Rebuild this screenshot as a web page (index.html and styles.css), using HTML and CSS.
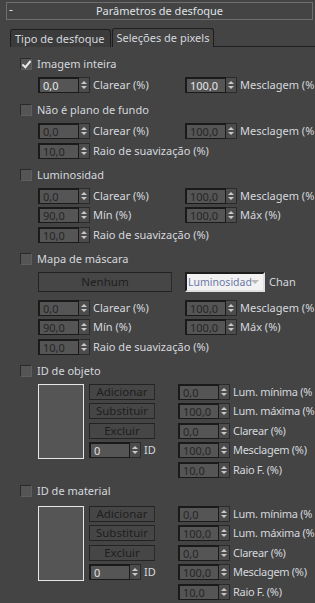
FILE: index.html
```html
<!DOCTYPE html>
<html lang="pt">
<head>
    <meta charset="UTF-8">
    <meta name="viewport" content="width=device-width, initial-scale=1.0">
    <title>Parâmetros de desfoque</title>
    <link rel="stylesheet" href="styles.css">
</head>
<body>

<!-- Rollout header -->
<div class="rollout-head">
    <span class="minus">-</span>
    <span class="title">Parâmetros de desfoque</span>
</div>

<!-- Tabs -->
<div class="tabs">
    <div class="tab">Tipo de desfoque</div>
    <div class="tab active">Seleções de pixels</div>
    <div class="tab-line"></div>
</div>

<!-- Imagem inteira -->
<div class="section first">
    <label class="check"><span class="box on"></span>Imagem inteira</label>
    <div class="rows">
        <div class="row">
            <div class="spin left"><span class="field live">0,0</span><span class="arrows"></span><span class="lbl">Clarear (%)</span></div>
            <div class="spin"><span class="field live">100,0</span><span class="arrows"></span><span class="lbl">Mesclagem (%</span></div>
        </div>
    </div>
</div>

<!-- Não é plano de fundo -->
<div class="section second">
    <label class="check"><span class="box"></span>Não é plano de fundo</label>
    <div class="rows">
        <div class="row">
            <div class="spin left"><span class="field">0,0</span><span class="arrows"></span><span class="lbl">Clarear (%)</span></div>
            <div class="spin"><span class="field">100,0</span><span class="arrows"></span><span class="lbl">Mesclagem (%</span></div>
        </div>
        <div class="row">
            <div class="spin left"><span class="field">10,0</span><span class="arrows"></span><span class="lbl">Raio de suavização (%)</span></div>
        </div>
    </div>
</div>

<!-- Luminosidad -->
<div class="section">
    <label class="check"><span class="box"></span>Luminosidad</label>
    <div class="rows">
        <div class="row">
            <div class="spin left"><span class="field">0,0</span><span class="arrows"></span><span class="lbl">Clarear (%)</span></div>
            <div class="spin"><span class="field">100,0</span><span class="arrows"></span><span class="lbl">Mesclagem (%</span></div>
        </div>
        <div class="row">
            <div class="spin left"><span class="field">90,0</span><span class="arrows"></span><span class="lbl">Mín (%)</span></div>
            <div class="spin"><span class="field">100,0</span><span class="arrows"></span><span class="lbl">Máx (%)</span></div>
        </div>
        <div class="row">
            <div class="spin left"><span class="field">10,0</span><span class="arrows"></span><span class="lbl">Raio de suavização (%)</span></div>
        </div>
    </div>
</div>

<!-- Mapa de máscara -->
<div class="section">
    <label class="check"><span class="box"></span>Mapa de máscara</label>
    <div class="rows">
        <div class="row map-row">
            <div class="btn wide">Nenhum</div>
            <div class="drop"><span class="drop-text">Luminosidad</span><span class="drop-arrow"></span></div>
            <span class="lbl">Chan</span>
        </div>
        <div class="row after-map">
            <div class="spin left"><span class="field">0,0</span><span class="arrows"></span><span class="lbl">Clarear (%)</span></div>
            <div class="spin"><span class="field">100,0</span><span class="arrows"></span><span class="lbl">Mesclagem (%</span></div>
        </div>
        <div class="row">
            <div class="spin left"><span class="field">90,0</span><span class="arrows"></span><span class="lbl">Mín (%)</span></div>
            <div class="spin"><span class="field">100,0</span><span class="arrows"></span><span class="lbl">Máx (%)</span></div>
        </div>
        <div class="row">
            <div class="spin left"><span class="field">10,0</span><span class="arrows"></span><span class="lbl">Raio de suavização (%)</span></div>
        </div>
    </div>
</div>

<!-- ID de objeto -->
<div class="section">
    <label class="check"><span class="box"></span>ID de objeto</label>
    <div class="id-block">
        <div class="list"></div>
        <div class="btn-col">
            <div class="btn">Adicionar</div>
            <div class="btn">Substituir</div>
            <div class="btn">Excluir</div>
            <div class="spin"><span class="field id-field">0</span><span class="arrows"></span><span class="lbl">ID</span></div>
        </div>
        <div class="right-col">
            <div class="spin"><span class="field">0,0</span><span class="arrows"></span><span class="lbl">Lum. mínima (%</span></div>
            <div class="spin"><span class="field">100,0</span><span class="arrows"></span><span class="lbl">Lum. máxima (%</span></div>
            <div class="spin"><span class="field">0,0</span><span class="arrows"></span><span class="lbl">Clarear (%)</span></div>
            <div class="spin"><span class="field">100,0</span><span class="arrows"></span><span class="lbl">Mesclagem (%)</span></div>
            <div class="spin"><span class="field">10,0</span><span class="arrows"></span><span class="lbl">Raio F. (%)</span></div>
        </div>
    </div>
</div>

<!-- ID de material -->
<div class="section material">
    <label class="check"><span class="box"></span>ID de material</label>
    <div class="id-block">
        <div class="list"></div>
        <div class="btn-col">
            <div class="btn">Adicionar</div>
            <div class="btn">Substituir</div>
            <div class="btn">Excluir</div>
            <div class="spin"><span class="field id-field">0</span><span class="arrows"></span><span class="lbl">ID</span></div>
        </div>
        <div class="right-col">
            <div class="spin"><span class="field">0,0</span><span class="arrows"></span><span class="lbl">Lum. mínima (%</span></div>
            <div class="spin"><span class="field">100,0</span><span class="arrows"></span><span class="lbl">Lum. máxima (%</span></div>
            <div class="spin"><span class="field">0,0</span><span class="arrows"></span><span class="lbl">Clarear (%)</span></div>
            <div class="spin"><span class="field">100,0</span><span class="arrows"></span><span class="lbl">Mesclagem (%)</span></div>
            <div class="spin"><span class="field">10,0</span><span class="arrows"></span><span class="lbl">Raio F. (%)</span></div>
        </div>
    </div>
</div>

</body>
</html>
```

FILE: styles.css
```css
/* General panel */
body {
    margin: 0;
    padding: 2px 0 0 0;
    width: 315px;
    height: 603px;
    overflow: hidden;
    background: #444444;
    color: #d4d8de;
    font-family: "Noto Sans", "Open Sans", sans-serif;
    font-size: 11px;
    line-height: 14px;
    white-space: nowrap;
}

/* Rollout header */
.rollout-head {
    position: relative;
    margin-left: 6px;
    width: 305px;
    height: 16px;
    border: 1px solid #6e6e6e;
    display: flex;
    align-items: center;
    justify-content: center;
    color: #dfe2e6;
}

.rollout-head .minus {
    position: absolute;
    left: 2px;
    top: 0;
    font-size: 12px;
}

/* Tabs */
.tabs {
    display: flex;
    align-items: flex-end;
    margin-top: 8px;
    padding-left: 10px;
    height: 19px;
}

.tab {
    height: 17px;
    padding: 0 5px 0 4px;
    border: 1px solid #1e1e1e;
    border-bottom: none;
    border-radius: 3px 3px 0 0;
    background: #3b3b3b;
    line-height: 17px;
}

.tab.active {
    height: 18px;
    background: #444444;
    margin-left: 1px;
    padding: 0 4px 0 4px;
}

.tab-line {
    flex: 1;
    border-bottom: 1px solid #1e1e1e;
}

/* Sections */
.section {
    padding-left: 20px;
    margin-top: 9px;
}

.section.first {
    margin-top: 10px;
}

.section.second {
    margin-top: 10px;
}

.check {
    display: flex;
    align-items: center;
    height: 14px;
    gap: 5px;
}

.box {
    flex-shrink: 0;
    width: 10px;
    height: 10px;
    background: #555555;
    border: 1px solid #2a2a2a;
    border-right-color: #5e5e5e;
    border-bottom-color: #5e5e5e;
    position: relative;
}

.box.on::after {
    content: "";
    position: absolute;
    left: 3px;
    top: 0px;
    width: 3px;
    height: 7px;
    border: solid #e8e8e8;
    border-width: 0 2px 2px 0;
    transform: rotate(40deg);
}

.rows {
    display: flex;
    flex-direction: column;
    gap: 3.5px;
    margin-top: 6px;
    padding-left: 18px;
}

.row {
    display: flex;
    height: 16px;
}

.map-row {
    height: 20px;
    align-items: center;
}

.after-map {
    margin-top: 4.5px;
}

/* Spinner */
.spin {
    display: flex;
    align-items: center;
    height: 16px;
}

.spin.left {
    flex-shrink: 0;
    width: 147px;
}

.field {
    flex-shrink: 0;
    box-sizing: border-box;
    width: 41px;
    height: 16px;
    padding-left: 3px;
    background: #555555;
    border: 1px solid #1a1a1a;
    border-top-width: 2px;
    border-left-width: 2px;
    line-height: 13px;
    color: #262626;
}

.field.live {
    color: #e4e6ea;
}

.arrows {
    flex-shrink: 0;
    box-sizing: border-box;
    position: relative;
    width: 11px;
    height: 16px;
    background: #4c4c4c;
    border: 1px solid #2a2a2a;
    border-left: none;
}

.arrows::before,
.arrows::after {
    content: "";
    position: absolute;
    left: 2px;
    border-left: 3px solid transparent;
    border-right: 3px solid transparent;
}

.arrows::before {
    top: 3px;
    border-bottom: 3px solid #c8c8c8;
}

.arrows::after {
    bottom: 3px;
    border-top: 3px solid #c8c8c8;
}

.lbl {
    margin-left: 3px;
}

/* Buttons */
.btn {
    flex-shrink: 0;
    box-sizing: border-box;
    height: 16px;
    border: 1px solid #232323;
    border-right-color: #2a2a2a;
    background: #464646;
    color: #1e1e1e;
    text-align: center;
    line-height: 14px;
    font-size: 11.5px;
}

.btn.wide {
    width: 134px;
    height: 20px;
    line-height: 18px;
    margin-right: 13px;
}

/* Dropdown */
.drop {
    flex-shrink: 0;
    box-sizing: border-box;
    position: relative;
    width: 80px;
    height: 20px;
    background: #f2f2f2;
    border: 2px solid #1e1e1e;
    border-right-color: #e0e0e0;
    border-bottom-color: #e0e0e0;
}

.drop-text {
    display: block;
    padding-left: 1px;
    line-height: 16px;
    font-size: 10.5px;
    color: #6a78a8;
}

.drop-arrow {
    position: absolute;
    right: 4px;
    top: 6px;
    border-left: 4px solid transparent;
    border-right: 4px solid transparent;
    border-top: 4px solid #b8b8b8;
}

.map-row .lbl {
    margin-left: 4px;
}

/* ID blocks */
.id-block {
    display: flex;
    margin-top: 6px;
    padding-left: 18px;
}

.list {
    flex-shrink: 0;
    box-sizing: border-box;
    width: 46px;
    height: 75px;
    background: #555555;
    border: 1px solid #e6e6e6;
}

.btn-col {
    flex-shrink: 0;
    display: flex;
    flex-direction: column;
    gap: 3.5px;
    width: 66px;
    margin-left: 5px;
}

.id-field {
    color: #e0e0e0;
}

.right-col {
    display: flex;
    flex-direction: column;
    gap: 3.5px;
    margin-left: 23px;
}

.right-col .lbl {
    letter-spacing: -0.3px;
}

.section.material {
    margin-top: 6px;
}

.material .id-block {
    margin-top: 8px;
}
```
